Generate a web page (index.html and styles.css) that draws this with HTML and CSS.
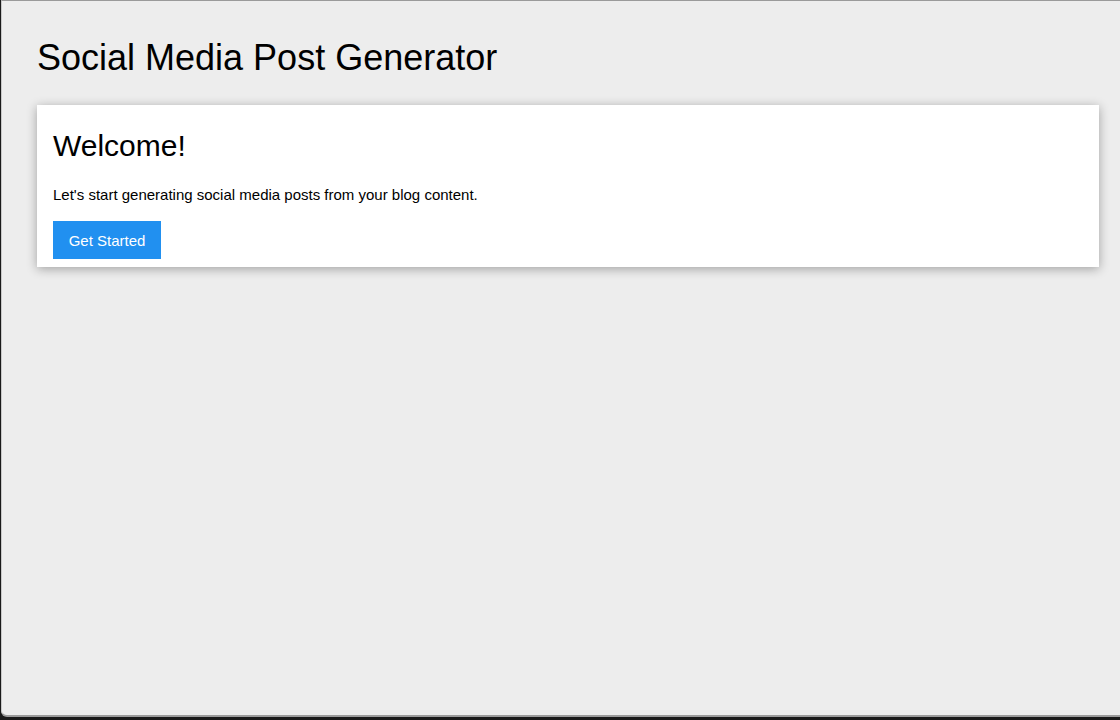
FILE: index.html
```html
<!DOCTYPE html>
<html lang="en">
<head>
<meta charset="utf-8">
<title>Social Media Post Generator</title>
<link rel="stylesheet" href="styles.css">
</head>
<body>
<div class="window">
  <main class="app">
    <h1 class="app-title">Social Media Post Generator</h1>
    <section class="card">
      <h2 class="card-title">Welcome!</h2>
      <p class="card-text">Let's start generating social media posts from your blog content.</p>
      <button class="btn-primary" type="button">Get Started</button>
    </section>
  </main>
</div>
</body>
</html>
```

FILE: styles.css
```css
html, body {
  margin: 0;
  padding: 0;
  height: 100%;
}
body {
  background: #1a1a1a;
  font-family: "Liberation Sans", Arial, sans-serif;
  color: #000;
}
.window {
  box-sizing: border-box;
  height: 717px;
  margin-left: 1px;
  background: #ededed;
  border-top: 1px solid #9a9a9a;
  border-left: 1px solid #c8c8c8;
  border-bottom-left-radius: 6px;
  border-bottom: 2px solid #9b9b9b;
  overflow: hidden;
}
.app {
  padding: 0 21px 0 35px;
}
.app-title {
  margin: 0;
  padding-top: 37px;
  font-size: 36px;
  font-weight: 400;
  line-height: 40px;
  letter-spacing: 0;
}
.card {
  margin-top: 27px;
  background: #fff;
  padding: 24px 16px 8px;
  box-shadow: 0 2px 10px rgba(0, 0, 0, 0.32);
  height: 162px;
  box-sizing: border-box;
}
.card-title {
  margin: 0;
  font-size: 30px;
  font-weight: 400;
  line-height: 34px;
}
.card-text {
  margin: 23px 0 0;
  font-size: 15px;
  line-height: 18px;
}
.btn-primary {
  display: block;
  margin-top: 17px;
  width: 108px;
  height: 38px;
  border: 0;
  background: #2190f0;
  color: #fff;
  font-family: "Liberation Sans", Arial, sans-serif;
  font-size: 15px;
  padding: 0;
  cursor: pointer;
}
```
